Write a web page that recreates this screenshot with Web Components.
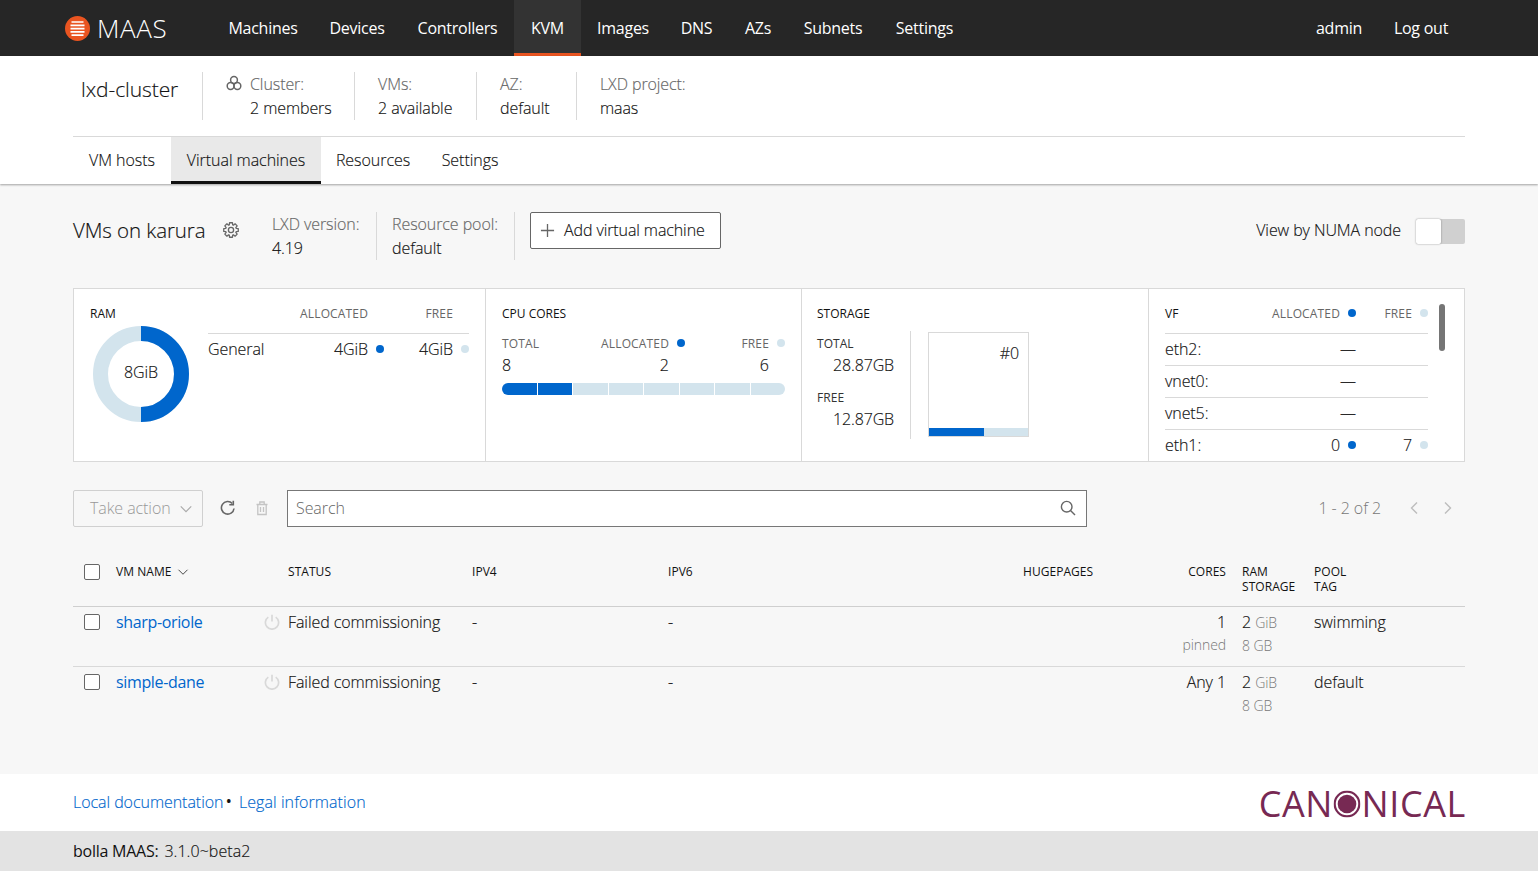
<!doctype html>
<html lang="en"><head><meta charset="utf-8"><title>MAAS</title>
<style>
html,body{margin:0;height:100%}
body{display:flex;flex-direction:column;min-height:871px;height:871px;overflow:hidden;background:#f7f7f7;color:#111;font:300 16px/24px "Open Sans","Noto Sans",sans-serif;letter-spacing:-.08px;-webkit-text-stroke:.15px currentColor}
</style></head><body>
<maas-nav>
  <nav-link style="width:100px">Machines</nav-link><nav-link style="width:88px">Devices</nav-link><nav-link style="width:113px">Controllers</nav-link><nav-link active style="width:67px">KVM</nav-link><nav-link style="width:84px">Images</nav-link><nav-link style="width:63px">DNS</nav-link><nav-link style="width:60px">AZs</nav-link><nav-link style="width:90px">Subnets</nav-link><nav-link style="width:93px">Settings</nav-link>
  <nav-link slot="right" style="width:76px">admin</nav-link><nav-link slot="right" style="width:88px">Log out</nav-link>
</maas-nav>
<kvm-header>
  <page-title slot="title" style="width:130px">lxd-cluster</page-title>
  <info-block slot="title" divided style="width:152px;padding-left:23px"><svg-icon name="cluster" slot="icon"></svg-icon><span slot="label">Cluster:</span>2 members</info-block>
  <info-block slot="title" divided style="width:122px;padding-left:23px"><span slot="label">VMs:</span>2 available</info-block>
  <info-block slot="title" divided style="width:100px;padding-left:23px"><span slot="label">AZ:</span>default</info-block>
  <info-block slot="title" style="width:140px;padding-left:23px"><span slot="label">LXD project:</span>maas</info-block>
  <tab-link style="width:98px">VM hosts</tab-link><tab-link active style="width:150px">Virtual machines</tab-link><tab-link style="width:104px">Resources</tab-link><tab-link style="width:90px">Settings</tab-link>
</kvm-header>
<main-area>
  <vm-head>
    <pool-title>VMs on karura</pool-title>
    <info-block divided style="width:105px"><span slot="label">LXD version:</span>4.19</info-block>
    <info-block divided style="width:123px;margin-left:15px"><span slot="label">Resource pool:</span>default</info-block>
    <maas-button style="margin-left:15px;width:191px"><svg-icon name="plus" slot="icon"></svg-icon>Add virtual machine</maas-button>
    <numa-toggle>View by NUMA node</numa-toggle>
  </vm-head>
  <summary-card>
    <ram-panel></ram-panel>
    <cpu-panel></cpu-panel>
    <storage-panel></storage-panel>
    <vf-panel></vf-panel>
  </summary-card>
  <vm-toolbar>
    <action-select>Take action</action-select>
    <svg-icon name="refresh" style="margin:-1px 0 0 17px"></svg-icon>
    <svg-icon name="trash" style="margin:-1px 0 0 18px"></svg-icon>
    <search-box style="margin-left:17px">Search</search-box>
    <page-nav>1 - 2 of 2</page-nav>
  </vm-toolbar>
  <vm-row head>
    <vm-check></vm-check>
    <vm-cell span2>VM NAME <svg-icon name="chevron" style="width:12px;height:12px;vertical-align:-2px;margin-left:2px"></svg-icon></vm-cell>
    <vm-cell>STATUS</vm-cell><vm-cell>IPV4</vm-cell><vm-cell>IPV6</vm-cell><vm-cell>HUGEPAGES</vm-cell>
    <vm-cell right>CORES</vm-cell><vm-gap></vm-gap><vm-cell>RAM<br>STORAGE</vm-cell><vm-cell>POOL<br>TAG</vm-cell>
  </vm-row>
  <vm-row>
    <vm-check></vm-check>
    <vm-link>sharp-oriole</vm-link><vm-power></vm-power>
    <vm-cell>Failed commissioning</vm-cell><vm-cell>-</vm-cell><vm-cell>-</vm-cell><vm-cell></vm-cell>
    <vm-cell right>1<vm-note>pinned</vm-note></vm-cell><vm-gap></vm-gap>
    <vm-cell>2 <vm-unit>GiB</vm-unit><vm-note>8 GB</vm-note></vm-cell><vm-cell>swimming</vm-cell>
  </vm-row>
  <vm-row last>
    <vm-check></vm-check>
    <vm-link>simple-dane</vm-link><vm-power></vm-power>
    <vm-cell>Failed commissioning</vm-cell><vm-cell>-</vm-cell><vm-cell>-</vm-cell><vm-cell></vm-cell>
    <vm-cell right>Any 1</vm-cell><vm-gap></vm-gap>
    <vm-cell>2 <vm-unit>GiB</vm-unit><vm-note>8 GB</vm-note></vm-cell><vm-cell>default</vm-cell>
  </vm-row>
</main-area>
<maas-footer></maas-footer>
<version-bar><b slot="name">bolla MAAS:</b>3.1.0~beta2</version-bar>
<script>
const def=(name,css,html)=>customElements.define(name,class extends HTMLElement{
  constructor(){super();this.attachShadow({mode:'open'}).innerHTML=`<style>${css}</style>${html}`}
});
const BLUE='#06c',LIGHT='#d3e4ed',LINE='#d9d9d9',NS='-webkit-text-stroke:0';
const gear=(()=>{let d='',n=8;for(let i=0;i<n;i++){const a=i/n*2*Math.PI;const p=[[5.4,-.32],[7.4,-.2],[7.4,.2],[5.4,.32]];
  for(const[r,o]of p){const x=(8+r*Math.sin(a+o)).toFixed(2),y=(8-r*Math.cos(a+o)).toFixed(2);d+=(d?'L':'M')+x+' '+y}}return d+'Z'})();
const ICONS={
 cluster:`<g fill="none" stroke="#666" stroke-width="1.5"><circle cx="8" cy="5" r="3.4"/><circle cx="4.6" cy="11" r="3.4"/><circle cx="11.4" cy="11" r="3.4"/></g>`,
 gear:`<path d="${gear}" fill="none" stroke="#666" stroke-width="1.3" stroke-linejoin="round"/><circle cx="8" cy="8" r="2.6" fill="none" stroke="#666" stroke-width="1.3"/>`,
 plus:`<path d="M8 1v14M1 8h14" stroke="#666" stroke-width="1.4"/>`,
 chevron:`<path d="M2 5l6 6 6-6" fill="none" stroke="#444" stroke-width="1.3"/>`,
 chevronMuted:`<path d="M2 5l6 6 6-6" fill="none" stroke="#aaa" stroke-width="1.3"/>`,
 left:`<path d="M11 2.5L5.5 8l5.5 5.5" fill="none" stroke="#bdbdbd" stroke-width="1.4"/>`,
 right:`<path d="M5 2.5L10.5 8 5 13.5" fill="none" stroke="#bdbdbd" stroke-width="1.4"/>`,
 refresh:`<path d="M14 8.5A6.3 6.3 0 1 1 12.3 3.5" fill="none" stroke="#666" stroke-width="1.6"/><path d="M13.3 .7v4h-4" fill="none" stroke="#666" stroke-width="1.6"/>`,
 trash:`<g fill="none" stroke="#c4c4c4" stroke-width="1.3"><path d="M2.5 4.5h11M5.8 4.5V2h4.4v2.5M3.8 4.5v10h8.4v-10M6.5 7v5M9.5 7v5"/></g>`,
 search:`<circle cx="6.7" cy="6.7" r="5.3" fill="none" stroke="#666" stroke-width="1.4"/><path d="M10.5 10.5L15 15" stroke="#666" stroke-width="1.4"/>`,
 power:`<path d="M4.3 3.1a6.6 6.6 0 1 0 7.4 0M8 .8v6.7" fill="none" stroke="#d9d9d9" stroke-width="1.7"/>`
};
customElements.define('svg-icon',class extends HTMLElement{constructor(){super();this.attachShadow({mode:'open'}).innerHTML=`<style>:host{display:inline-block;width:16px;height:16px;flex:none}svg{display:block;width:100%;height:100%}</style><svg viewBox="0 0 16 16">${ICONS[this.getAttribute('name')]||''}</svg>`}});

def('maas-nav',`:host{display:flex;flex:none;height:56px;background:#262626;color:#fff;padding:0 73px 0 65px;font-weight:400;letter-spacing:-.25px;${NS}}
 .brand{display:flex;align-items:center;width:148px;flex:none;gap:7px}
 .brand svg{width:25px;height:25px;flex:none}
 .word{font-size:26px;font-weight:300;letter-spacing:.6px;line-height:54px}
 .r{margin-left:auto;display:flex}`,
 `<div class="brand"><svg viewBox="0 0 25 25"><circle cx="12.5" cy="12.5" r="12.5" fill="#e95420"/><path d="M6.5 6h12M5.500 9.3h14M5.500 12.600h14M5.500 15.900h14M6.500 19.200h12" stroke="#fff" stroke-width="1.7"/></svg><span class="word">MAAS</span></div><slot></slot><div class="r"><slot name="right"></slot></div>`);
def('nav-link',`:host{display:block;flex:none;height:56px;line-height:56px;text-align:center;box-sizing:border-box;color:#fff}
 :host([active]){background:#333;border-bottom:3px solid #e95420}`,`<slot></slot>`);
def('kvm-header',`:host{display:block;flex:none;background:#fff;padding:0 73px;height:128px;box-shadow:0 1px 2px rgba(0,0,0,.35);position:relative;box-sizing:border-box}
 .t{display:flex;height:64px;padding-top:16px;border-bottom:1px solid ${LINE}}
 .b{display:flex;height:47px}`,`<div class="t"><slot name="title"></slot></div><div class="b"><slot></slot></div>`);
def('page-title',`:host{display:block;flex:none;box-sizing:border-box;height:48px;padding-left:8px;font-size:21px;line-height:34px;border-right:1px solid ${LINE}}`,`<slot></slot>`);
def('info-block',`:host{display:block;flex:none;box-sizing:border-box;height:48px;line-height:24px}
 :host([divided]){border-right:1px solid ${LINE}}
 .l{color:#666}
 ::slotted(svg-icon){margin-right:8px;margin-top:3px;height:16px}
 .row{display:flex}`,`<div class="row"><slot name="icon"></slot><div><div class="l"><slot name="label"></slot></div><div><slot></slot></div></div></div>`);
def('tab-link',`:host{display:block;flex:none;height:47px;line-height:47px;box-sizing:border-box;text-align:center;letter-spacing:-.05px}
 :host([active]){background:#e9e9e9;border-bottom:3px solid #111}`,`<slot></slot>`);
def('main-area',`:host{display:block;flex:1;padding:0 73px;min-height:0}`,`<slot></slot>`);
def('vm-head',`:host{display:flex;padding-top:28px;height:48px;align-items:flex-start}`,`<slot></slot>`);
def('pool-title',`:host{display:flex;flex:none;width:199px;align-items:center;height:36px}
 .h{font-size:20.5px;line-height:35px}
 svg-icon{margin-left:auto;margin-right:33px}`,`<span class="h"><slot></slot></span><svg-icon name="gear"></svg-icon>`);
def('maas-button',`:host{display:flex;flex:none;box-sizing:border-box;height:37px;border:1px solid #666;border-radius:2px;background:#fff;align-items:center;padding:0 0 2px 9px;gap:9px;letter-spacing:-.1px}
 ::slotted(svg-icon){width:15px;height:15px;margin-top:2px}`,`<slot name="icon"></slot><slot></slot>`);
def('numa-toggle',`:host{display:flex;margin-left:auto;align-items:center;height:36px;flex:none}
 .t{margin-left:15px;width:49px;height:25px;background:#d0d0d0;border-radius:2px;position:relative;margin-top:3px;flex:none}
 .k{position:absolute;left:0;top:0;width:25px;height:25px;background:#fff;border-radius:2px;box-shadow:0 0 2px rgba(0,0,0,.4)}`,`<slot></slot><span class="t"><span class="k"></span></span>`);
def('summary-card',`:host{display:grid;grid-template-columns:412px 316px 347px 1fr;height:174px;box-sizing:border-box;margin-top:28px;background:#fff;border:1px solid ${LINE}}`,`<slot></slot>`);
def('panel-title',`:host{display:block;font-size:12px;font-weight:400;line-height:20px;height:18px;color:#111;white-space:nowrap;letter-spacing:0;${NS}}`,`<slot></slot>`);
def('m-dot',`:host{display:block;width:8px;height:8px;border-radius:50%;background:${BLUE}} :host([light]){background:${LIGHT}}`,``);
def('meter-row',`:host{display:grid;grid-template-columns:var(--cols);height:32px;padding-bottom:2px;box-sizing:border-box;align-items:center;white-space:nowrap}
 :host([line]){border-bottom:1px solid ${LINE}}
 :host([head]){height:30px;padding:0;align-items:start;font-size:12px;font-weight:400;line-height:20px;color:#666;letter-spacing:.15px;${NS}}
 :host([compact]){height:19px;padding:0;font-size:12px;font-weight:400;line-height:20px;color:#666;letter-spacing:.15px;align-items:start;${NS}}
 div{grid-row:1}
 .l{grid-column:1}.a{grid-column:2;text-align:right}.d{grid-column:3;display:flex;justify-content:flex-end;align-self:center}
 .b{grid-column:4;text-align:right}.e{grid-column:5;display:flex;justify-content:flex-end;align-self:center}
 .x{grid-column:2/4;text-align:right}
 :host([head]) .d,:host([head]) .e,:host([compact]) .d,:host([compact]) .e{align-self:start;padding-top:5px}`,
 `<div class="l"><slot name="label"></slot></div><div class="a"><slot name="a"></slot></div><div class="d"><slot name="da"></slot></div><div class="b"><slot name="b"></slot></div><div class="e"><slot name="db"></slot></div><div class="x"><slot name="dash"></slot></div>`);
const panel=`:host{display:block;box-sizing:border-box;height:172px;padding:15px 16px 0;overflow:hidden;border-right:1px solid ${LINE};position:relative}`;
def('ram-panel',panel+`.w{display:grid;grid-template-columns:118px 261px;--cols:80px 80px 16px 69px 16px}
 .d{display:grid;width:96px;height:96px;margin:4px 0 0 3px;place-items:center} .d>*{grid-area:1/1} svg{width:96px;height:96px;display:block}
 .c{margin-bottom:4px}`,
 `<div class="w"><div><panel-title>RAM</panel-title><div class="d"><svg viewBox="0 0 96 96"><circle cx="48" cy="48" r="40.5" fill="none" stroke="${LIGHT}" stroke-width="15"/><path d="M48 7.5a40.5 40.5 0 0 1 0 81" fill="none" stroke="${BLUE}" stroke-width="15"/></svg><span class="c">8GiB</span></div></div>
 <div><meter-row head line><span slot="a">ALLOCATED</span><span slot="b">FREE</span></meter-row>
 <meter-row><span slot="label">General</span><span slot="a">4GiB</span><m-dot slot="da"></m-dot><span slot="b">4GiB</span><m-dot slot="db" light></m-dot></meter-row></div></div>`);
def('cpu-panel',panel+`.w{--cols:60px 107px 16px 84px 16px;width:283px}
 meter-row:first-of-type{margin-top:12px}
 .v{font-size:16px;font-weight:300;color:#111;letter-spacing:0;line-height:24px;height:24px;-webkit-text-stroke:.15px currentColor}
 .bar{display:grid;grid-template-columns:repeat(8,1fr);gap:1px;height:12px;margin-top:6px;border-radius:6px;overflow:hidden}
 .bar i{background:${LIGHT}} .bar i.on{background:${BLUE}}`,
 `<panel-title>CPU CORES</panel-title><div class="w"><meter-row compact><span slot="label">TOTAL</span><span slot="a">ALLOCATED</span><m-dot slot="da"></m-dot><span slot="b">FREE</span><m-dot slot="db" light></m-dot></meter-row>
 <meter-row compact class="v"><span slot="label">8</span><span slot="a">2</span><span slot="b">6</span></meter-row>
 <div class="bar"><i class="on"></i><i class="on"></i><i></i><i></i><i></i><i></i><i></i><i></i></div></div>`);
def('storage-panel',panel+`:host{padding-left:15px}.w{display:flex;margin-top:9px;height:108px}
 .s{width:94px;box-sizing:border-box;border-right:1px solid ${LINE};padding-right:16px;flex:none}
 .k{font-size:12px;font-weight:400;height:24px;line-height:26px;letter-spacing:.05px;color:#333;${NS}}
 .v{line-height:20px;text-align:right;padding-bottom:10px;letter-spacing:-.15px}
 .box{margin:1px 0 0 17px;width:101px;height:105px;box-sizing:border-box;border:1px solid ${LINE};display:flex;flex-direction:column;text-align:right;padding:8px 0 0}
 .n{padding-right:9px;flex:1;line-height:24px}
 .u{display:flex;height:8px;background:${LIGHT}}.u i{width:55px;background:${BLUE}}`,
 `<panel-title>STORAGE</panel-title><div class="w"><div class="s"><div class="k">TOTAL</div><div class="v">28.87GB</div><div class="k">FREE</div><div class="v">12.87GB</div></div><div class="box"><div class="n">#0</div><div class="u"><i></i></div></div></div>`);
def('vf-panel',panel+`:host{border-right:0}.w{width:263px;--cols:95px 80px 16px 56px 16px}
 .sb{position:absolute;left:290px;top:15px;width:6px;height:47px;border-radius:3px;background:#757575}`,
 `<div class="w"><meter-row head line><panel-title slot="label">VF</panel-title><span slot="a">ALLOCATED</span><m-dot slot="da"></m-dot><span slot="b">FREE</span><m-dot slot="db" light></m-dot></meter-row>
 <meter-row line><span slot="label">eth2:</span><span slot="dash">—</span></meter-row>
 <meter-row line><span slot="label">vnet0:</span><span slot="dash">—</span></meter-row>
 <meter-row line><span slot="label">vnet5:</span><span slot="dash">—</span></meter-row>
 <meter-row><span slot="label">eth1:</span><span slot="a">0</span><m-dot slot="da"></m-dot><span slot="b">7</span><m-dot slot="db" light></m-dot></meter-row></div><div class="sb"></div>`);
def('vm-toolbar',`:host{display:flex;align-items:center;height:37px;margin-top:28px}`,`<slot></slot>`);
def('action-select',`:host{display:flex;flex:none;box-sizing:border-box;width:130px;height:37px;border:1px solid #d0d0d0;border-radius:2px;align-items:center;padding:0 9px 2px 16px;color:#999;justify-content:space-between;background:#f7f7f7;${NS}}
 svg-icon{width:14px;height:14px;margin-top:2px}`,`<span><slot></slot></span><svg-icon name="chevronMuted"></svg-icon>`);
def('search-box',`:host{display:flex;flex:none;box-sizing:border-box;width:800px;height:37px;border:1px solid #777;background:#fff;align-items:center;padding:0 10px 2px 8px;color:#666;justify-content:space-between;${NS}}
 svg-icon{margin-top:1px}`,`<span><slot></slot></span><svg-icon name="search"></svg-icon>`);
def('page-nav',`:host{display:flex;margin-left:auto;align-items:center;color:#777;padding:0 9px 2px 0;${NS}}
 svg-icon{margin-top:1px} svg-icon:first-of-type{margin-left:25px} svg-icon+svg-icon{margin-left:18px}`,`<slot></slot><svg-icon name="left"></svg-icon><svg-icon name="right"></svg-icon>`);
def('vm-row',`:host{display:grid;grid-template-columns:43px 148px 24px 184px 196px 355px 97px 106px 16px 72px 151px;height:60px;box-sizing:border-box;padding-top:3px;border-bottom:1px solid ${LINE};line-height:24px;--ct:4px}
 :host([last]){border-bottom:0}
 :host([head]){height:80px;padding-top:37px;font-size:12px;font-weight:400;line-height:15px;letter-spacing:.05px;--ct:0px;border-color:#cfcfcf;${NS}}`,`<slot></slot>`);
def('vm-cell',`:host{display:block;white-space:nowrap} :host([right]){text-align:right} :host([span2]){grid-column:span 2}`,`<slot></slot>`);
def('vm-gap',`:host{display:block}`,``);
def('vm-note',`:host{display:block;font-size:14px;line-height:22px;color:#777;${NS}}`,`<slot></slot>`);
def('vm-unit',`:host{font-size:14px;color:#777;${NS}}`,`<slot></slot>`);
def('vm-link',`:host{display:block;color:${BLUE};font-weight:400;letter-spacing:-.35px;${NS}}`,`<slot></slot>`);
def('vm-check',`:host{display:block;box-sizing:border-box;width:16px;height:16px;margin:var(--ct) 0 0 11px;background:#fff;border:1px solid #666;border-radius:2px}`,``);
def('vm-power',`:host{display:block;margin-top:var(--ct);width:16px;height:16px} svg-icon{display:block}`,`<svg-icon name="power"></svg-icon>`);
def('maas-footer',`:host{display:flex;flex:none;height:57px;background:#fff;padding:0 73px;align-items:center;justify-content:space-between;box-sizing:border-box}
 a{color:${BLUE};text-decoration:none;font-weight:300;letter-spacing:-.05px}
 a+span+a{letter-spacing:.08px}
 .l{display:flex;align-items:center;margin-top:-2px} .s{margin:0 8px 0 3px;font-size:12px;font-weight:700}`,
 `<div class="l"><a href="#">Local documentation</a><span class="s">•</span><a href="#">Legal information</a></div><canonical-logo></canonical-logo>`);
def('canonical-logo',`:host{display:block;font-size:36px;line-height:36px;font-weight:500;color:#772953;letter-spacing:.6px;white-space:nowrap;margin-top:2px;margin-right:-1px;${NS}}
 .o{position:relative;display:inline-block;color:transparent}
 svg{position:absolute;left:50%;top:50%;width:27px;height:27px;transform:translate(-50%,-50%)}`,
 `CAN<span class="o">O<svg viewBox="0 0 27 27"><circle cx="13.5" cy="13.5" r="12.3" fill="none" stroke="#772953" stroke-width="2.2"/><circle cx="13.5" cy="13.5" r="9.3" fill="#772953"/></svg></span>NICAL`);
def('version-bar',`:host{display:flex;flex:none;height:40px;background:#e3e3e3;padding:0 73px;align-items:center;gap:6px;letter-spacing:.05px}
 ::slotted(b){font-weight:400;letter-spacing:-.25px;-webkit-text-stroke:0}`,`<slot name="name"></slot><slot></slot>`);
</script>
</body></html>
